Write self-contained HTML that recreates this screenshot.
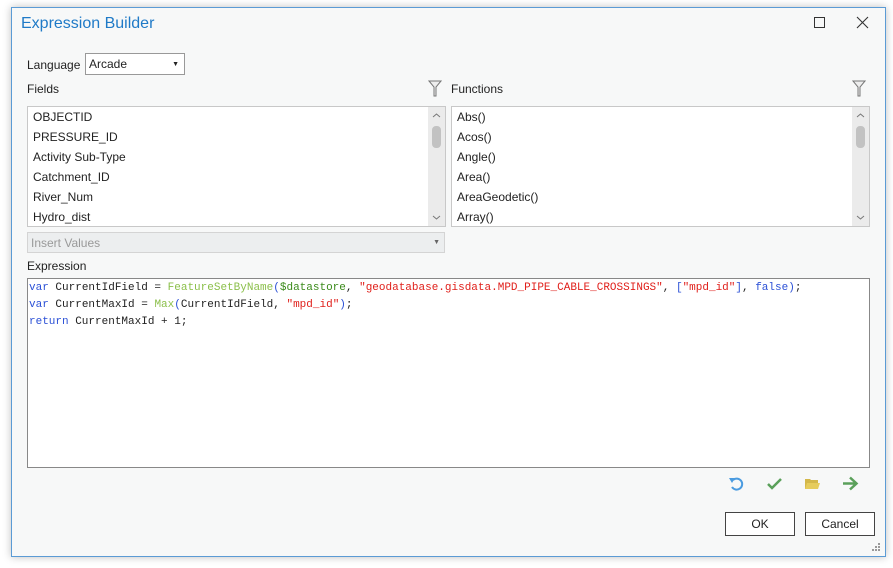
<!DOCTYPE html>
<html><head><style>
body{margin:0;width:893px;height:568px;background:#fff;position:relative;overflow:hidden;font-family:"Liberation Sans",sans-serif;font-size:12px;color:#222}
.dlg{position:absolute;left:11px;top:7px;width:873px;height:548px;border:1px solid #5b9bd5;background:#f7f8f8;box-shadow:0 0 8px rgba(0,0,0,.25)}
.a{position:absolute}
.title{left:21px;top:15px;font-size:16px;color:#1f7ac7}
.list{background:#fff;border:1px solid #c8c8c8;overflow:hidden}
.list .it{height:20px;line-height:21px;padding-left:5px}
.sb{position:absolute;right:0;top:0;width:17px;height:100%;background:#ebebeb}
.thumb{position:absolute;left:4px;top:19px;width:9px;height:22px;border-radius:4px;background:#c2c2c2}
.arr{position:absolute;left:4px}
.code{font-family:"Liberation Mono",monospace;font-size:11px;line-height:17px;white-space:pre;color:#222}
.k{color:#2b50d6}.f{color:#8bbf4a}.s{color:#e0201b}.v{color:#3a8a1a}
.btn{border:1px solid #444;background:#fff;text-align:center;line-height:22px;font-size:12px}
</style></head><body>
<div class="dlg"></div>
<div class="a title">Expression Builder</div>
<div class="a" style="left:814px;top:17px;width:9px;height:9px;border:1px solid #333"></div>
<svg class="a" style="left:856px;top:16px" width="13" height="13"><path d="M1 1L12 12M12 1L1 12" stroke="#333" stroke-width="1.1"/></svg>
<div class="a" style="left:27px;top:58px">Language</div>
<div class="a" style="left:85px;top:53px;width:100px;height:22px;border:1px solid #999;background:#fff;line-height:21px;padding-left:3px;box-sizing:border-box">Arcade<span style="position:absolute;right:5px;top:0;font-size:7px">▼</span></div>
<div class="a" style="left:27px;top:82px">Fields</div>
<div class="a" style="left:451px;top:82px">Functions</div>
<svg class="a" style="left:428px;top:80px" width="14" height="17"><path d="M1 1H13L8 7V16H6V7Z" fill="#eee" stroke="#777"/></svg>
<svg class="a" style="left:852px;top:80px" width="14" height="17"><path d="M1 1H13L8 7V16H6V7Z" fill="#eee" stroke="#777"/></svg>
<div class="a list" style="left:27px;top:106px;width:417px;height:119px">
<div class="it">OBJECTID</div><div class="it">PRESSURE_ID</div><div class="it">Activity Sub-Type</div><div class="it">Catchment_ID</div><div class="it">River_Num</div><div class="it">Hydro_dist</div>
<div class="sb"><svg class="arr" style="top:6px" width="9" height="5"><path d="M1 4L4.5 1L8 4" fill="none" stroke="#777"/></svg><div class="thumb"></div><svg class="arr" style="bottom:6px" width="9" height="5"><path d="M1 1L4.5 4L8 1" fill="none" stroke="#777"/></svg></div></div>
<div class="a list" style="left:451px;top:106px;width:417px;height:119px">
<div class="it">Abs()</div><div class="it">Acos()</div><div class="it">Angle()</div><div class="it">Area()</div><div class="it">AreaGeodetic()</div><div class="it">Array()</div>
<div class="sb"><svg class="arr" style="top:6px" width="9" height="5"><path d="M1 4L4.5 1L8 4" fill="none" stroke="#777"/></svg><div class="thumb"></div><svg class="arr" style="bottom:6px" width="9" height="5"><path d="M1 1L4.5 4L8 1" fill="none" stroke="#777"/></svg></div></div>
<div class="a" style="left:27px;top:232px;width:418px;height:21px;background:#eceeef;border:1px solid #d4d4d4;box-sizing:border-box;color:#999;line-height:20px;padding-left:3px">Insert Values<span style="position:absolute;right:4px;top:0;font-size:7px;color:#666">▼</span></div>
<div class="a" style="left:27px;top:259px">Expression</div>
<div class="a code" style="left:27px;top:278px;width:843px;height:190px;background:#fff;border:1px solid #888;padding-left:1px;padding-top:1px;box-sizing:border-box"><span class="k">var</span> CurrentIdField = <span class="f">FeatureSetByName</span><span class="k">(</span><span class="v">$datastore</span>, <span class="s">"geodatabase.gisdata.MPD_PIPE_CABLE_CROSSINGS"</span>, <span class="k">[</span><span class="s">"mpd_id"</span><span class="k">]</span>, <span class="k">false</span><span class="k">)</span>;
<span class="k">var</span> CurrentMaxId = <span class="f">Max</span><span class="k">(</span>CurrentIdField, <span class="s">"mpd_id"</span><span class="k">)</span>;
<span class="k">return</span> CurrentMaxId + 1;</div>
<svg class="a" style="left:728px;top:475px" width="18" height="17"><path d="M5 5A5.5 5.5 0 1 1 4 12" fill="none" stroke="#4a9be0" stroke-width="2"/><path d="M1 3L7 3L4 8Z" fill="#4a9be0"/></svg>
<svg class="a" style="left:767px;top:477px" width="16" height="13"><path d="M1 7L5 11L14 2" fill="none" stroke="#5aa05a" stroke-width="2.5"/></svg>
<svg class="a" style="left:804px;top:477px" width="17" height="13"><path d="M1 2H6L7 3H14V12H1Z" fill="#d4b84a"/><path d="M3 6H16L14 12H1Z" fill="#e6cc5c"/></svg>
<svg class="a" style="left:842px;top:476px" width="17" height="15"><path d="M1 7.5H14M8 1.5L14.5 7.5L8 13.5" fill="none" stroke="#5aa05a" stroke-width="2.5"/></svg>
<div class="a btn" style="left:725px;top:512px;width:68px;height:22px">OK</div>
<div class="a btn" style="left:805px;top:512px;width:68px;height:22px">Cancel</div>
<svg class="a" style="left:871px;top:542px" width="10" height="10" fill="#999"><rect x="7" y="1" width="2" height="2"/><rect x="4" y="4" width="2" height="2"/><rect x="7" y="4" width="2" height="2"/><rect x="1" y="7" width="2" height="2"/><rect x="4" y="7" width="2" height="2"/><rect x="7" y="7" width="2" height="2"/></svg>
</body></html>
